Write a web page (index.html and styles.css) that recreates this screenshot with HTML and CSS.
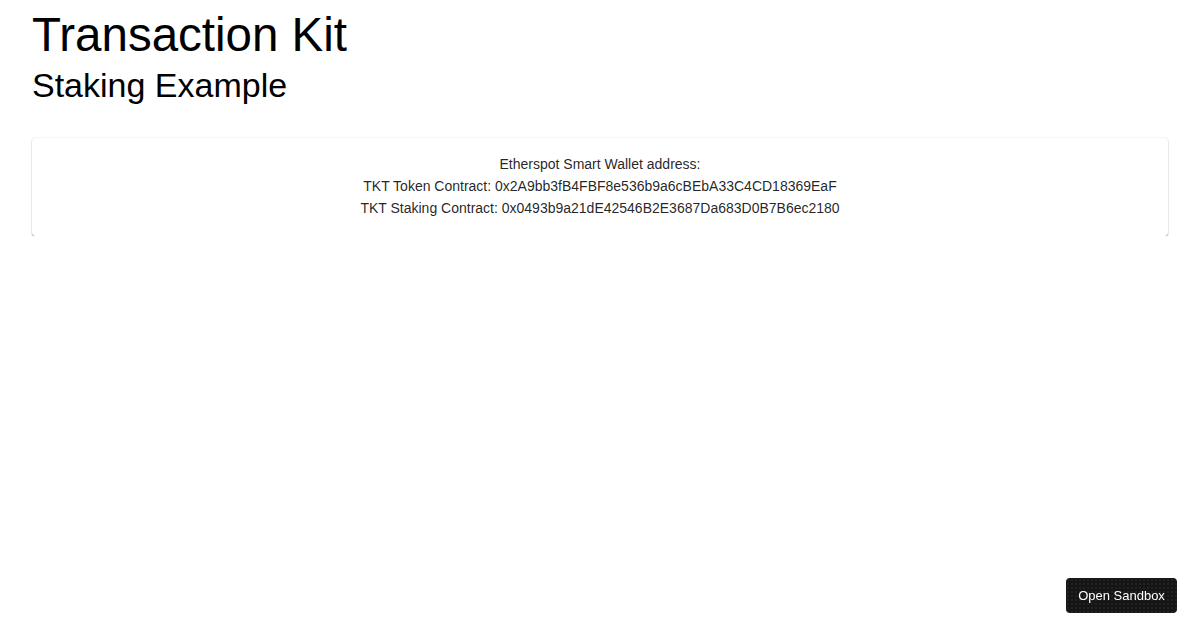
FILE: index.html
```html
<!DOCTYPE html>
<html>
<head>
<meta charset="utf-8">
<link rel="stylesheet" href="styles.css">
</head>
<body>
<div class="container">
  <h1 class="title">Transaction Kit</h1>
  <h2 class="subtitle">Staking Example</h2>
  <div class="paper">
    <p class="line">Etherspot Smart Wallet address: </p>
    <p class="line">TKT Token Contract: 0x2A9bb3fB4FBF8e536b9a6cBEbA33C4CD18369EaF</p>
    <p class="line">TKT Staking Contract: 0x0493b9a21dE42546B2E3687Da683D0B7B6ec2180</p>
  </div>
</div>
<a class="sandbox-btn">Open Sandbox</a>
</body>
</html>
```
FILE: styles.css
```css
html, body {
  margin: 0;
  padding: 0;
  background: #fff;
  font-family: "Liberation Sans", Arial, sans-serif;
  color: rgba(0, 0, 0, 0.87);
}
.container {
  padding: 6px 32px 0;
}
.title {
  margin: 0;
  font-size: 47.5px;
  font-weight: 400;
  line-height: 58px;
  color: #000;
}
.subtitle {
  margin: 0;
  font-size: 34px;
  font-weight: 400;
  line-height: 42px;
  color: #000;
}
.paper {
  margin-top: 32px;
  background: #fff;
  border-radius: 4px;
  box-shadow: 0 1px 1px 0 rgba(0,0,0,0.32), 0 0 2px 0 rgba(0,0,0,0.10), 0 1px 3px 0 rgba(0,0,0,0.08);
  padding: 15px 16px 17px;
  text-align: center;
}
.line {
  margin: 0;
  font-size: 14px;
  line-height: 22px;
}
.sandbox-btn {
  position: fixed;
  right: 23px;
  bottom: 17px;
  width: 111px;
  height: 35px;
  box-sizing: border-box;
  display: flex;
  align-items: center;
  justify-content: center;
  background-color: #151515;
  background-image: radial-gradient(rgba(255,255,255,0.12) 0.6px, transparent 0.8px);
  background-size: 4px 4px;
  border-radius: 4px;
  color: #fff;
  font-size: 13px;
  font-family: "Liberation Sans", Arial, sans-serif;
}
```
